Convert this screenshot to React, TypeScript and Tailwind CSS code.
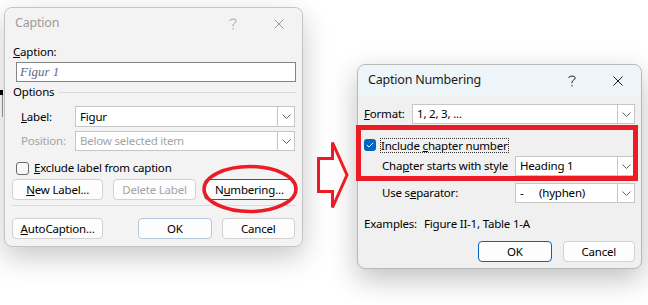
import React from "react";

const font = { fontFamily: '"Noto Sans", "Segoe UI", sans-serif', letterSpacing: "-0.2px" };

function Chevron({ color = "#606060" }: { color?: string }) {
  return (
    <svg width="9" height="5" viewBox="0 0 9 5">
      <path d="M0.5 0.5 L4.5 4.5 L8.5 0.5" fill="none" stroke={color} strokeWidth="1" />
    </svg>
  );
}

function Select({
  text,
  disabled,
  className = "",
}: {
  text: React.ReactNode;
  disabled?: boolean;
  className?: string;
}) {
  return (
    <div className={`flex items-stretch bg-white border border-[#c6c6c6] ${className}`}>
      <div className={`flex-1 flex items-center pl-[4px] whitespace-nowrap ${disabled ? "text-[#a3a3a3]" : "text-black"}`}>{text}</div>
      <div className="w-[17px] border-l border-[#c6c6c6] flex items-center justify-center">
        <Chevron />
      </div>
    </div>
  );
}

function Button({
  children,
  className = "",
  variant = "normal",
}: {
  children: React.ReactNode;
  className?: string;
  variant?: "normal" | "disabled" | "focus" | "default";
}) {
  const border =
    variant === "focus"
      ? "border-[#0067c0]"
      : variant === "default"
      ? "border-[#b4c8dc]"
      : "border-[#d2d2d2]";
  const color = variant === "disabled" ? "text-[#a3a3a3]" : "text-black";
  return (
    <div
      className={`h-[21px] flex items-center justify-center whitespace-nowrap rounded-[4px] border bg-[#fdfdfd] ${border} ${color} ${className}`}
    >
      {children}
    </div>
  );
}

function TitleBar({ title, active }: { title: string; active?: boolean }) {
  const c = active ? "#1a1a1a" : "#9b9b9b";
  return (
    <div
      className={`h-[31px] flex items-center rounded-t-[8px] ${active ? "bg-[#eef5f8]" : "bg-[#f3f3f3]"}`}
    >
      <span className={`flex-1 pl-[10px] text-[12.5px] ${active ? "text-[#1a1a1a]" : "text-[#9b9b9b]"}`}>{title}</span>
      <span className="w-[46px] flex justify-center">
        <svg width="8" height="12" viewBox="0 0 8 12">
          <path d="M0.8 3 C0.8 0.5 7.2 0.5 7.2 3 C7.2 5 4 5 4 7.5 L4 8.3" fill="none" stroke={c} strokeWidth="1" />
          <rect x="3.5" y="10" width="1" height="1.3" fill={c} />
        </svg>
      </span>
      <span className="w-[46px] flex justify-center">
        <svg width="10" height="10" viewBox="0 0 10 10">
          <path d="M0.5 0.5 L9.5 9.5 M9.5 0.5 L0.5 9.5" stroke={c} strokeWidth="1" />
        </svg>
      </span>
    </div>
  );
}

function Check({ checked }: { checked?: boolean }) {
  if (checked) {
    return (
      <div className="w-[12px] h-[12px] shrink-0 rounded-[3px] bg-[#0067c0] flex items-center justify-center">
        <svg width="8" height="6" viewBox="0 0 8 6">
          <path d="M0.8 3 L3 5 L7.2 0.8" fill="none" stroke="white" strokeWidth="1" />
        </svg>
      </div>
    );
  }
  return <div className="w-[13px] h-[13px] shrink-0 rounded-[3px] border border-[#6b6b6b] bg-[#f8f8f8]" />;
}

function CaptionDialog() {
  return (
    <div className="absolute left-[4px] top-[7px] w-[299px] h-[240px] rounded-[8px] border border-[#c4c4c4] bg-[#f3f3f3] shadow-[0_10px_28px_rgba(0,0,0,0.22)] flex flex-col">
      <TitleBar title="Caption" />
      <div className="flex flex-col px-[7px] text-[11.5px] leading-[16px] whitespace-nowrap">
        <div className="mt-[5px] pl-[1px]">
          <u>C</u>aption:
        </div>
        <div className="mt-[2px] ml-[4px] mr-[-1px] h-[20px] bg-white border border-[#858585] flex items-center pl-[3px]">
          <span
            className="italic text-[#5b6a82] text-[13px]"
            style={{ fontFamily: '"Liberation Serif", "Times New Roman", serif', letterSpacing: 0 }}
          >
            Figur 1
          </span>
        </div>
        <div className="mt-[2px] flex items-center pl-[1px]">
          <span>Options</span>
          <div className="flex-1 ml-[5px] h-px bg-[#dadada] mr-[-1px]" />
        </div>
        <div className="mt-[6px] flex items-center h-[21px]">
          <span className="w-[63px] pl-[9px]">
            <u>L</u>abel:
          </span>
          <Select text="Figur" className="flex-1 h-[21px]" />
        </div>
        <div className="mt-[4px] flex items-center h-[20px]">
          <span className="w-[63px] pl-[9px] text-[#a3a3a3]">Position:</span>
          <Select text="Below selected item" disabled className="flex-1 h-[20px]" />
        </div>
        <div className="mt-[9px] flex items-center h-[16px] gap-[5px] pl-[4px]">
          <Check />
          <span>
            <u>E</u>xclude label from caption
          </span>
        </div>
        <div className="mt-[3px] flex items-center">
          <Button className="w-[92px]">
            <span>
              <u>N</u>ew Label...
            </span>
          </Button>
          <Button className="w-[83px] ml-[10px]" variant="disabled">
            Delete Label
          </Button>
          <Button className="w-[92px] ml-[8px]" variant="focus">
            <span>
              N<u>u</u>mbering...
            </span>
          </Button>
        </div>
        <div className="mt-[5px] h-px bg-[#dadada]" />
        <div className="mt-[12px] flex items-center">
          <Button className="w-[92px]">
            <span>
              <u>A</u>utoCaption...
            </span>
          </Button>
          <Button className="w-[74px] ml-[35px]" variant="default">
            OK
          </Button>
          <Button className="w-[74px] ml-[10px]">Cancel</Button>
        </div>
      </div>
    </div>
  );
}

function NumberingDialog() {
  return (
    <div className="absolute left-[357px] top-[64px] w-[285px] h-[205px] rounded-[8px] border border-[#b8b8b8] bg-[#f0f0f0] shadow-[0_10px_28px_rgba(0,0,0,0.25)] flex flex-col">
      <TitleBar title="Caption Numbering" active />
      <div className="flex flex-col px-[6px] text-[11.5px] leading-[16px] whitespace-nowrap">
        <div className="mt-[8px] flex items-center h-[20px]">
          <span className="w-[48px]">
            <u>F</u>ormat:
          </span>
          <Select text="1, 2, 3, ..." className="flex-1 h-[20px]" />
        </div>
        <div className="mt-[15px] flex items-center h-[12px] gap-[5px]">
          <Check checked />
          <span className="outline outline-1 outline-dotted outline-[#333] leading-[13px]">
            Include <u>c</u>hapter number
          </span>
        </div>
        <div className="mt-[5px] flex items-center h-[20px]">
          <span className="w-[151px] pl-[18px]">
            Cha<u>p</u>ter starts with style
          </span>
          <Select text="Heading 1" className="flex-1 h-[20px]" />
        </div>
        <div className="mt-[7px] flex items-center h-[20px]">
          <span className="w-[151px] pl-[18px]">
            Use s<u>e</u>parator:
          </span>
          <Select
            text={
              <span className="flex">
                <span className="w-[19px]">-</span>
                <span>(hyphen)</span>
              </span>
            }
            className="flex-1 h-[20px]"
          />
        </div>
        <div className="mt-[13px] flex items-center">
          <span className="w-[60px]">Examples:</span>
          <span>Figure II-1, Table 1-A</span>
        </div>
        <div className="mt-[9px] flex items-center">
          <Button className="w-[74px] ml-[114px]" variant="focus">
            OK
          </Button>
          <Button className="w-[73px] ml-[11px]">Cancel</Button>
        </div>
      </div>
    </div>
  );
}

export default function App() {
  return (
    <div className="relative w-[648px] h-[305px] bg-white overflow-hidden text-black" style={font}>
      {/* artifacts at left edge */}
      <div className="absolute left-0 top-[90px] w-[3px] h-[5px] bg-black" />
      <div className="absolute left-[2px] top-[95px] w-px h-[22px] bg-[#9a9a9a]" />

      <CaptionDialog />
      <NumberingDialog />

      {/* red ellipse around Numbering */}
      <svg className="absolute left-[200px] top-[163px]" width="100" height="52" viewBox="0 0 100 52">
        <ellipse cx="50" cy="26" rx="46" ry="22.5" fill="none" stroke="#ed1c24" strokeWidth="3.5" />
      </svg>

      {/* red arrow */}
      <svg className="absolute left-[314px] top-[139px]" width="38" height="72" viewBox="0 0 38 72">
        <path
          d="M4.5 19.5 L18.5 19.5 L18.5 3.5 L33 36 L18.5 68.5 L18.5 52.5 L4.5 52.5 Z"
          fill="none"
          stroke="#ed1c24"
          strokeWidth="3"
          strokeLinejoin="miter"
        />
      </svg>

      {/* red rectangle */}
      <div className="absolute left-[356px] top-[125px] w-[282px] h-[56px] border-[5px] border-[#ed1c24]" />
    </div>
  );
}
